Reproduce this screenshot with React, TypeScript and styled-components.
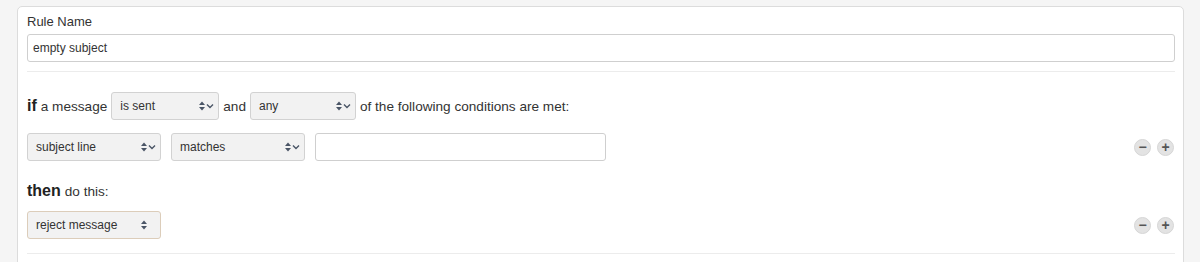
import React from 'react';
import styled, { createGlobalStyle } from 'styled-components';

const GlobalStyle = createGlobalStyle`
  html, body {
    margin: 0;
    padding: 0;
    background: #f5f5f5;
    font-family: "Liberation Sans", Arial, Helvetica, sans-serif;
    color: #333;
  }
  body {
    height: 262px;
    overflow: hidden;
  }
`;

interface SelectProps {
  width: number;
  chevron?: boolean;
  accent?: boolean;
}

const SelectArrows: React.FC<{ chevron?: boolean }> = ({ chevron }) => (
  <svg width={chevron ? 16 : 8} height="12" viewBox={chevron ? '0 0 16 12' : '0 0 8 12'}>
    <path d="M1 5 L4 1.5 L7 5 Z" fill="#4a5566" />
    <path d="M1 7 L4 10.5 L7 7 Z" fill="#4a5566" />
    {chevron && (
      <path d="M9 4.5 L12 7.5 L15 4.5" fill="none" stroke="#4a5566" strokeWidth="1.4" />
    )}
  </svg>
);

const Select: React.FC<SelectProps & { children: React.ReactNode }> = ({
  width,
  chevron,
  accent,
  children,
}) => (
  <SelectBox $width={width} $accent={accent}>
    <span>{children}</span>
    <SelectArrows chevron={chevron} />
  </SelectBox>
);

const RuleEditor: React.FC = () => (
  <Panel>
    <FieldLabel>Rule Name</FieldLabel>
    <TextInput $width="100%">empty subject</TextInput>
    <Divider />

    <SentenceRow>
      <Keyword>if</Keyword>
      <Words>a message</Words>
      <Select width={108} chevron>
        is sent
      </Select>
      <Words>and</Words>
      <Select width={106} chevron>
        any
      </Select>
      <Words>of the following conditions are met:</Words>
    </SentenceRow>

    <ConditionRow>
      <Controls>
        <Select width={134} chevron>
          subject line
        </Select>
        <Select width={134} chevron>
          matches
        </Select>
        <TextInput $width="291px" />
      </Controls>
      <RowButtons>
        <RoundButton>−</RoundButton>
        <RoundButton>+</RoundButton>
      </RowButtons>
    </ConditionRow>

    <ThenLine>
      <Keyword>then</Keyword>
      <Words>do this:</Words>
    </ThenLine>

    <ActionRow>
      <Select width={134} accent>
        reject message
      </Select>
      <RowButtons>
        <RoundButton>−</RoundButton>
        <RoundButton>+</RoundButton>
      </RowButtons>
    </ActionRow>
    <Divider $bottom />
  </Panel>
);

const App: React.FC = () => (
  <>
    <GlobalStyle />
    <RuleEditor />
  </>
);

const Panel = styled.div`
  margin: 6px 0 0 17px;
  width: 1167px;
  box-sizing: border-box;
  height: 280px;
  padding: 7px 8px 0 9px;
  background: #fff;
  border: 1px solid #dcdcdc;
  border-radius: 5px;
`;

const FieldLabel = styled.div`
  font-size: 13px;
  line-height: 16px;
  color: #333;
  margin-bottom: 4px;
`;

const TextInput = styled.div<{ $width: string }>`
  width: ${(p) => p.$width};
  height: 28px;
  box-sizing: border-box;
  border: 1px solid #cfcfcf;
  border-radius: 3px;
  background: #fff;
  padding: 0 5px;
  font-size: 12px;
  line-height: 26px;
  color: #333;
`;

const Divider = styled.div<{ $bottom?: boolean }>`
  height: 1px;
  background: #ececec;
  margin-top: ${(p) => (p.$bottom ? '14px' : '9px')};
`;

const SentenceRow = styled.div`
  display: flex;
  align-items: center;
  gap: 4px;
  margin-top: 20px;
  height: 28px;
`;

const Keyword = styled.span`
  font-size: 16px;
  font-weight: 700;
  color: #222;
`;

const Words = styled.span`
  font-size: 13.6px;
  color: #333;
`;

const SelectBox = styled.div<{ $width: number; $accent?: boolean }>`
  display: flex;
  align-items: center;
  justify-content: space-between;
  width: ${(p) => p.$width}px;
  height: 28px;
  box-sizing: border-box;
  padding: 0 4px 0 8px;
  background: #f2f2f2;
  border: 1px solid ${(p) => (p.$accent ? '#dccdba' : '#d2d2d2')};
  border-radius: 3px;
  font-size: 12px;
  color: #333;

  svg {
    margin-right: ${(p) => (p.$accent ? '8px' : '0')};
  }
`;

const ConditionRow = styled.div`
  display: flex;
  align-items: center;
  justify-content: space-between;
  margin-top: 13px;
`;

const Controls = styled.div`
  display: flex;
  align-items: center;
  gap: 10px;
`;

const RowButtons = styled.div`
  display: flex;
  gap: 6px;
  margin-right: 1px;
`;

const RoundButton = styled.div`
  width: 17px;
  height: 17px;
  box-sizing: border-box;
  border-radius: 50%;
  background: #e3e3e3;
  border: 1px solid #d6d6d6;
  color: #555;
  font-size: 14px;
  font-weight: 700;
  line-height: 15px;
  text-align: center;
`;

const ThenLine = styled.div`
  display: flex;
  align-items: baseline;
  gap: 4px;
  margin-top: 20px;
  line-height: 20px;
`;

const ActionRow = styled.div`
  display: flex;
  align-items: center;
  justify-content: space-between;
  margin-top: 9px;
`;

export default App;
